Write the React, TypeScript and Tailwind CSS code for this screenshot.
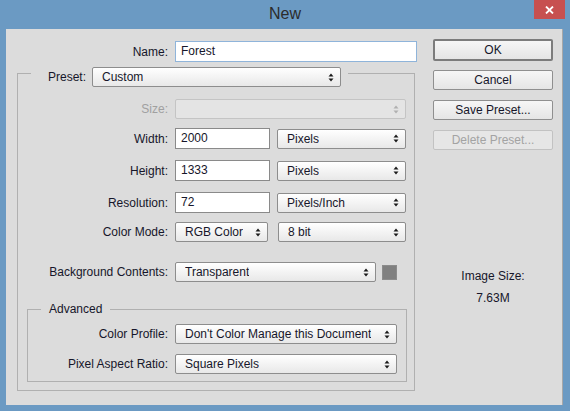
import React from "react";

function Arrow({ disabled }: { disabled?: boolean }) {
  return (
    <svg width="6" height="9" viewBox="0 0 6 9" className="shrink-0">
      <path d="M3 0.5 L5.5 3.5 L0.5 3.5 Z" fill={disabled ? "#b0b0b0" : "#1a1a1a"} />
      <path d="M0.5 5.5 L5.5 5.5 L3 8.5 Z" fill={disabled ? "#b0b0b0" : "#1a1a1a"} />
    </svg>
  );
}

function Select({ w, text, disabled }: { w: string; text?: string; disabled?: boolean }) {
  return (
    <div
      className={
        w +
        " h-[20px] shrink-0 flex items-center justify-between pl-[9px] pr-[6px] rounded-[2px] border " +
        (disabled
          ? "border-[#c4c4c4] bg-[#e4e4e4]"
          : "border-[#8d8d8d] bg-gradient-to-b from-[#ffffff] to-[#e8e8e8]")
      }
    >
      <span className="truncate leading-[18px]">{text}</span>
      <Arrow disabled={disabled} />
    </div>
  );
}

function Input({ w, text, focus }: { w: string; text: string; focus?: boolean }) {
  return (
    <div
      className={
        w +
        " h-[21px] shrink-0 flex items-center pl-[5px] bg-white border " +
        (focus ? "border-[#8fb4da]" : "border-[#8a8a8a]")
      }
    >
      <span className="leading-[19px]">{text}</span>
    </div>
  );
}

function Button({ text, def, disabled, h }: { text: string; def?: boolean; disabled?: boolean; h: string }) {
  return (
    <div
      className={
        h +
        " w-[120px] flex items-center justify-center rounded-[2px] " +
        (def
          ? "border-2 border-[#7c7c7c] bg-gradient-to-b from-[#f6f6f6] to-[#e5e5e5]"
          : disabled
          ? "border border-[#c2c2c2] bg-[#e6e6e6] text-[#a3a3a3]"
          : "border border-[#8f8f8f] bg-gradient-to-b from-[#f6f6f6] to-[#e5e5e5]")
      }
    >
      {text}
    </div>
  );
}

export default function App() {
  return (
    <div className="w-[570px] h-[411px] bg-[#6b9ac3] flex flex-col font-['Liberation_Sans',Arial,sans-serif] text-[12px] text-[#16162a]">
      <div className="relative h-[29px] flex items-center justify-center">
        <span className="text-[16px] text-[#2c2c2c] font-['Liberation_Sans',Arial,sans-serif] pb-[1px]">New</span>
        <div className="absolute right-[5px] top-0 w-[31px] h-[19px] bg-[#c75050] flex items-center justify-center">
          <svg width="9" height="8" viewBox="0 0 9 8">
            <path d="M1 0.5 L8 7.5 M8 0.5 L1 7.5" stroke="#ffffff" strokeWidth="1.8" />
          </svg>
        </div>
      </div>
      <div className="ml-[6px] mr-[7px] h-[376px] bg-[#dcdcdc] border-r border-[#a8a8a8] flex">
        {/* left column */}
        <div className="w-[413px] pt-[12px] flex flex-col">
          <div className="flex items-center h-[21px]">
            <span className="w-[162px] text-right">Name:</span>
            <div className="ml-[7px]">
              <Input w="w-[242px]" text="Forest" focus />
            </div>
          </div>

          <div className="mt-[11px] ml-[11px] w-[398px] border border-[#b0b0b0] flex flex-col">
            <div className="-mt-[7px] flex">
              <div className="ml-[13px] pl-[17px] pr-[7px] flex items-center bg-[#dcdcdc]">
                <span className="w-[44px]">Preset:</span>
                <Select w="w-[249px]" text="Custom" />
              </div>
            </div>

            <div className="mt-[12px] flex items-center">
              <span className="w-[150px] text-right text-[#a0a0a0]">Size:</span>
              <div className="ml-[7px]">
                <Select w="w-[231px]" disabled />
              </div>
            </div>

            <div className="mt-[9px] flex items-center">
              <span className="w-[150px] text-right">Width:</span>
              <div className="ml-[7px] flex items-center">
                <Input w="w-[95px]" text="2000" />
                <div className="ml-[7px]">
                  <Select w="w-[129px]" text="Pixels" />
                </div>
              </div>
            </div>

            <div className="mt-[11px] flex items-center">
              <span className="w-[150px] text-right">Height:</span>
              <div className="ml-[7px] flex items-center">
                <Input w="w-[95px]" text="1333" />
                <div className="ml-[7px]">
                  <Select w="w-[129px]" text="Pixels" />
                </div>
              </div>
            </div>

            <div className="mt-[11px] flex items-center">
              <span className="w-[150px] text-right">Resolution:</span>
              <div className="ml-[7px] flex items-center">
                <Input w="w-[95px]" text="72" />
                <div className="ml-[7px]">
                  <Select w="w-[129px]" text="Pixels/Inch" />
                </div>
              </div>
            </div>

            <div className="mt-[9px] flex items-center">
              <span className="w-[150px] text-right">Color Mode:</span>
              <div className="ml-[7px] flex items-center">
                <Select w="w-[93px]" text="RGB Color" />
                <div className="ml-[10px]">
                  <Select w="w-[128px]" text="8 bit" />
                </div>
              </div>
            </div>

            <div className="mt-[20px] flex items-center">
              <span className="w-[150px] text-right">Background Contents:</span>
              <div className="ml-[7px] flex items-center">
                <Select w="w-[201px]" text="Transparent" />
                <div className="ml-[6px] w-[15px] h-[15px] bg-[#808080] border border-[#8c8c8c]" />
              </div>
            </div>

            <div className="mt-[27px] ml-[9px] mr-[7px] mb-[8px] border border-[#b0b0b0] flex flex-col pb-[7px]">
              <div className="-mt-[8px] h-[15px] flex">
                <span className="ml-[13px] px-[8px] bg-[#dcdcdc] leading-[15px]">Advanced</span>
              </div>
              <div className="mt-[7px] flex items-center">
                <span className="w-[140px] text-right">Color Profile:</span>
                <div className="ml-[7px]">
                  <Select w="w-[222px]" text="Don't Color Manage this Document" />
                </div>
              </div>
              <div className="mt-[10px] flex items-center">
                <span className="w-[140px] text-right">Pixel Aspect Ratio:</span>
                <div className="ml-[7px]">
                  <Select w="w-[222px]" text="Square Pixels" />
                </div>
              </div>
            </div>
          </div>
        </div>

        {/* right column */}
        <div className="ml-[14px] w-[120px] pt-[10px] flex flex-col items-center">
          <Button text="OK" def h="h-[22px]" />
          <div className="mt-[9px]">
            <Button text="Cancel" h="h-[20px]" />
          </div>
          <div className="mt-[10px]">
            <Button text="Save Preset..." h="h-[20px]" />
          </div>
          <div className="mt-[10px]">
            <Button text="Delete Preset..." disabled h="h-[20px]" />
          </div>
          <div className="mt-[119px] leading-[14px]">Image Size:</div>
          <div className="mt-[8px] leading-[14px]">7.63M</div>
        </div>
      </div>
    </div>
  );
}
